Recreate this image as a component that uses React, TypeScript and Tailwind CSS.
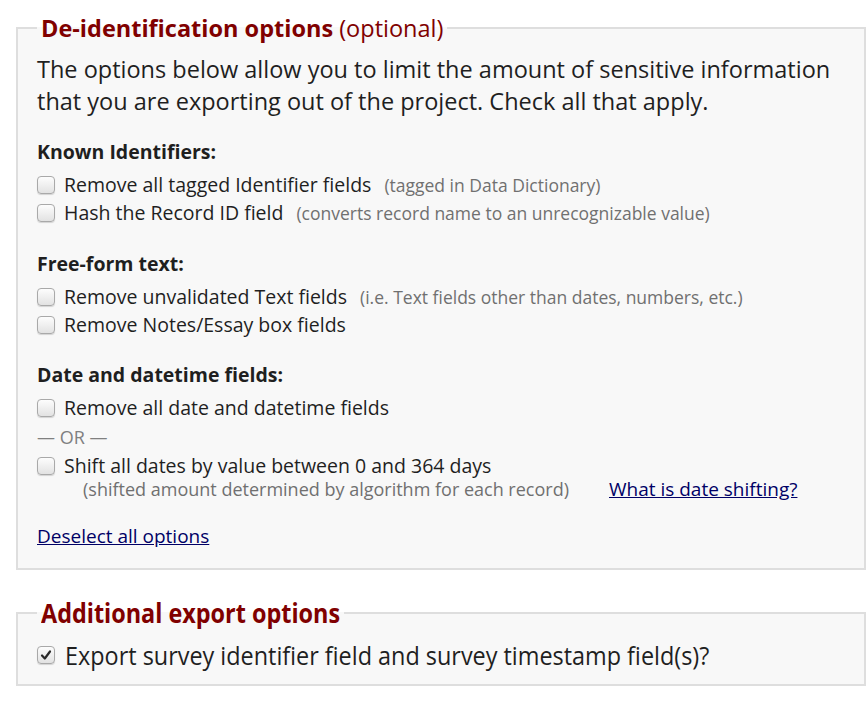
import React from 'react';

type Option = { label: string; note?: string; checked?: boolean };

const groups: { title: string; options: Option[] }[] = [
  {
    title: 'Known Identifiers:',
    options: [
      { label: 'Remove all tagged Identifier fields', note: '(tagged in Data Dictionary)' },
      { label: 'Hash the Record ID field', note: '(converts record name to an unrecognizable value)' },
    ],
  },
  {
    title: 'Free-form text:',
    options: [
      { label: 'Remove unvalidated Text fields', note: '(i.e. Text fields other than dates, numbers, etc.)' },
      { label: 'Remove Notes/Essay box fields' },
    ],
  },
];

function Box({ checked }: { checked?: boolean }) {
  return (
    <span className="flex h-[18px] w-[18px] shrink-0 items-center justify-center rounded-[4px] border border-[#a9a9a9] bg-[linear-gradient(180deg,#fdfdfd_0%,#e2e2e2_100%)] shadow-[0_1px_1px_rgba(0,0,0,0.15)]">
      {checked ? (
        <svg viewBox="0 0 12 12" className="h-[12px] w-[12px]">
          <path d="M2 6.5 L4.8 9.5 L10 2.5" fill="none" stroke="#2a2a2a" strokeWidth="2.2" strokeLinecap="round" strokeLinejoin="round" />
        </svg>
      ) : null}
    </span>
  );
}

function Row({ option }: { option: Option }) {
  return (
    <div className="flex h-[28px] items-center gap-[9px]">
      <Box checked={option.checked} />
      <span className="whitespace-nowrap text-[19.5px] leading-[28px] text-[#1f1f1f]">{option.label}</span>
      {option.note ? (
        <span className="ml-[4px] whitespace-nowrap text-[17.5px] leading-[28px] text-[#707070]">{option.note}</span>
      ) : null}
    </div>
  );
}

function Heading({ children }: { children: React.ReactNode }) {
  return <div className="mb-[5px] text-[19.5px] font-bold leading-[28px] text-[#1f1f1f]">{children}</div>;
}

export default function App() {
  return (
    <div className="min-h-screen bg-white pl-[16px] pt-[12px] font-['Open_Sans','Liberation_Sans',sans-serif]">
      <fieldset className="w-[850px] border-2 border-[#dedede] bg-[#f8f8f8] pb-[18px] pl-[19px] pr-[20px]">
        <legend className="px-[4px] text-[23.5px] leading-[32px] text-[#800000]">
          <span className="font-bold">De-identification options</span> <span>(optional)</span>
        </legend>
        <p className="mt-[9px] text-[23.5px] leading-[32px] text-[#1f1f1f]">
          The options below allow you to limit the amount of sensitive information that you are exporting out of the
          project. Check all that apply.
        </p>

        <div className="mt-[21px]">
          {groups.map((group, i) => (
            <div key={group.title} className={i > 0 ? 'mt-[23px]' : ''}>
              <Heading>{group.title}</Heading>
              {group.options.map((option) => (
                <Row key={option.label} option={option} />
              ))}
            </div>
          ))}
        </div>

        <div className="mt-[22px]">
          <Heading>Date and datetime fields:</Heading>
          <Row option={{ label: 'Remove all date and datetime fields' }} />
          <div className="flex h-[30px] items-center text-[18px] leading-[24px] text-[#808080]">— OR —</div>
          <Row option={{ label: 'Shift all dates by value between 0 and 364 days' }} />
          <div className="flex h-[18px] items-center whitespace-nowrap">
            <span className="ml-[46px] w-[526px] text-[18px] leading-[18px] text-[#707070]">
              (shifted amount determined by algorithm for each record)
            </span>
            <a href="#" className="text-[19px] leading-[18px] text-[#000066] underline">
              What is date shifting?
            </a>
          </div>
        </div>

        <div className="mt-[24px] flex h-[28px] items-center">
          <a href="#" className="text-[19px] text-[#000066] underline">
            Deselect all options
          </a>
        </div>
      </fieldset>

      <fieldset className="mt-[27px] w-[850px] border-2 border-[#dedede] bg-[#f8f8f8] pb-[13px] pl-[19px] pr-[20px]">
        <legend className="px-[4px] text-[26px] font-bold leading-[32px] text-[#800000]">
          <span className="-mr-[33px] inline-block origin-left scale-x-[0.9]">Additional export options</span>
        </legend>
        <div className="mt-[10px] flex h-[32px] items-center gap-[10px]">
          <Box checked />
          <span className="inline-block origin-left scale-x-[0.9] whitespace-nowrap text-[26px] leading-[32px] text-[#1f1f1f]">
            Export survey identifier field and survey timestamp field(s)?
          </span>
        </div>
      </fieldset>
    </div>
  );
}
